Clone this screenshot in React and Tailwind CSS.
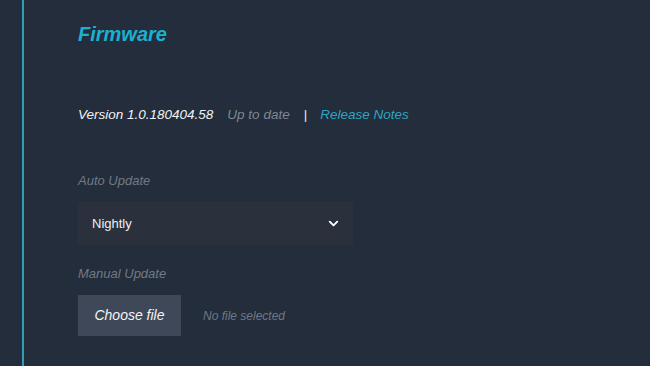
import { ChevronDown } from 'lucide-react';

export default function App() {
  return (
    <div className="flex h-[366px] w-[650px] overflow-hidden bg-[#232d3b] font-['Liberation_Sans',sans-serif]">
      <div className="ml-[22px] w-[2px] bg-[#2f9fb6]" />
      <div className="flex flex-col pl-[54px] pt-[22px]">
        <h1 className="text-[20px] font-bold italic leading-[24px] text-[#1cb0d0]">Firmware</h1>

        <div className="mt-[60px] flex items-center text-[13.5px] leading-[18px]">
          <span className="italic text-[#f1f3f5]">Version 1.0.180404.58</span>
          <span className="ml-[14px] italic text-[#7f8894]">Up to date</span>
          <span className="ml-[14px] text-[#e8ebee]">|</span>
          <span className="ml-[13px] italic text-[#2ba6c2]">Release Notes</span>
        </div>

        <div className="mt-[49px] text-[13px] italic leading-[16px] text-[#717a87]">Auto Update</div>
        <div className="mt-[13px] flex h-[43px] w-[275px] items-center justify-between bg-[#2a313d] pl-[14px] pr-[12px]">
          <span className="text-[13px] text-[#eef0f2]">Nightly</span>
          <ChevronDown className="h-[15px] w-[15px] text-white" strokeWidth={3} />
        </div>

        <div className="mt-[21px] text-[13px] italic leading-[16px] text-[#717a87]">Manual Update</div>
        <div className="mt-[13px] flex items-center">
          <button className="flex h-[41px] w-[103px] items-center justify-center bg-[#3e4858] text-[14px] italic text-[#f3f4f6]">
            Choose file
          </button>
          <span className="ml-[22px] text-[12px] italic text-[#6f7885]">No file selected</span>
        </div>
      </div>
    </div>
  );
}
